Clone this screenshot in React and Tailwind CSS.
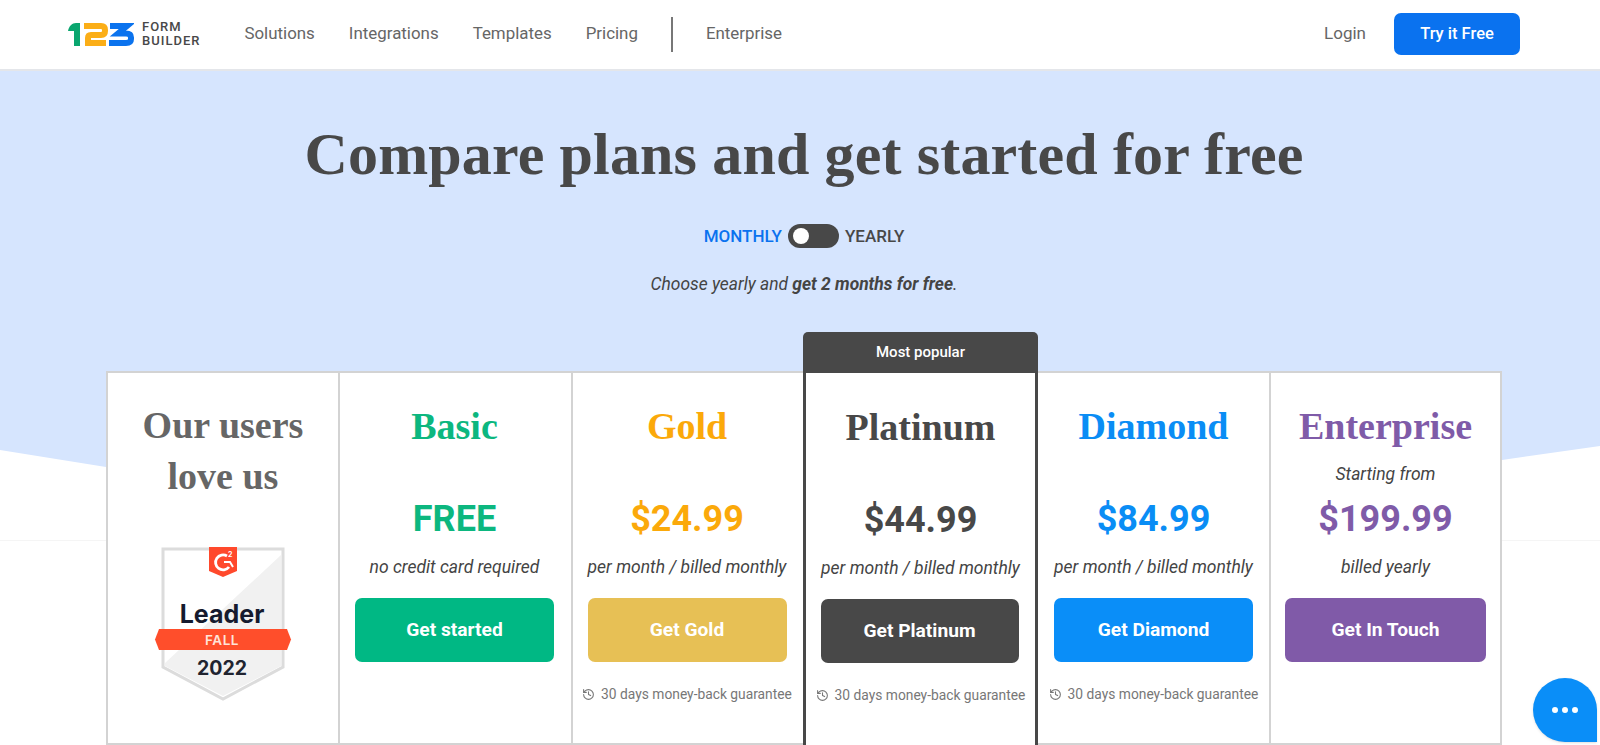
import React from 'react'
import { History } from 'lucide-react'

const plans = [
  { name: 'Basic', color: 'text-[#0cb77f]', price: 'FREE', note: 'no credit card required', cta: 'Get started', btn: 'bg-[#00b884] w-[199px]', cell: 'pr-[2px]' },
  { name: 'Gold', color: 'text-[#fba90a]', price: '$24.99', note: 'per month / billed monthly', cta: 'Get Gold', btn: 'bg-[#e7c055] w-[199px]', cell: 'pr-[2px]', guarantee: true },
  { name: 'Platinum', color: 'text-[#484848]', price: '$44.99', note: 'per month / billed monthly', cta: 'Get Platinum', btn: 'bg-[#484848] w-[198px] mr-[2px]', guarantee: true, popular: true },
  { name: 'Diamond', color: 'text-[#0a8df5]', price: '$84.99', note: 'per month / billed monthly', cta: 'Get Diamond', btn: 'bg-[#0a8ef8] w-[199px]', cell: '', guarantee: true },
  { name: 'Enterprise', color: 'text-[#7f5ba8]', price: '$199.99', note: 'billed yearly', cta: 'Get In Touch', btn: 'bg-[#805aa8] w-[201px]', cell: '', starting: true },
]

function Logo() {
  return (
    <svg width="66" height="26" viewBox="0 0 66 26" className="shrink-0">
      <path d="M0 10 C1 5 4 2 8 2 H12 V25 H6 V10 Z" fill="#0aa66f" />
      <path d="M16 5 H33 Q37 5 37 9 V10 Q37 14 33 14 H23 Q20 14 20 17 V22 H38" fill="none" stroke="#fbae17" strokeWidth="6" />
      <path d="M42 5 H59 L50 12.5 H58 Q63 12.5 63 16.5 V18 Q63 22 58 22 H41" fill="none" stroke="#0b73ee" strokeWidth="6" />
    </svg>
  )
}

function Badge() {
  return (
    <svg width="138" height="154" viewBox="0 0 138 154">
      <path d="M9 2 H129 V120 L69 152 L9 120 Z" fill="#ffffff" stroke="#dcdcdc" strokeWidth="3" />
      <path d="M127 8 V119 L69 149 L11 119 L11 116 Z" fill="#f1f1f1" />
      <path d="M55 0 H83 V24 L69 30 L55 24 Z" fill="#ff492c" />
      <path d="M73 9 A7.5 7.5 0 1 0 75 20" fill="none" stroke="#ffffff" strokeWidth="2.8" />
      <path d="M70 15 H76 L79 20" fill="none" stroke="#ffffff" strokeWidth="2" />
      <text x="74" y="10" fontFamily="Inter, sans-serif" fontWeight="700" fontSize="7" fill="#ffffff">2</text>
      <text x="68" y="76" textAnchor="middle" fontFamily="Inter, sans-serif" fontWeight="700" fontSize="25" fill="#151a2e">Leader</text>
      <path d="M5 82 H133 L137 92.5 L133 103 H5 L1 92.5 Z" fill="#ff4e2b" />
      <text x="68" y="98" textAnchor="middle" fontFamily="Inter, sans-serif" fontWeight="600" fontSize="13.5" letterSpacing="0.5" fill="#ffe3d8">FALL</text>
      <text x="68" y="128" textAnchor="middle" fontFamily="Inter, sans-serif" fontWeight="700" fontSize="19.5" fill="#20232f">2022</text>
    </svg>
  )
}

function PlanColumn({ plan }) {
  return (
    <div className={`relative flex flex-col items-center h-full ${plan.popular ? 'border-x-[3px] border-[#484848] -mr-[2px] pt-[1px] z-10 bg-white' : `border-l-2 border-b-2 border-[#d3d3d3] ${plan.cell}`}`}>
      {plan.popular && (
        <div className="absolute left-[-3px] right-[-3px] top-[-41px] h-[41px] bg-[#484848] rounded-t-[5px] flex items-center justify-center text-white text-[15px] font-medium">
          Most popular
        </div>
      )}
      <h3 className={`font-['Liberation_Serif',serif] font-bold text-[38px] leading-[40px] mt-[33px] ${plan.color}`}>{plan.name}</h3>
      <p className="italic text-[17.5px] leading-[20px] h-[20px] mt-[18px] text-[#444]">{plan.starting ? 'Starting from' : ''}</p>
      <p className={`font-bold text-[36px] leading-[42px] mt-[14px] ${plan.color}`}>{plan.price}</p>
      <p className="italic text-[17.5px] leading-[20px] mt-[17px] text-[#444]">{plan.note}</p>
      <a className={`mt-[21px] h-[64px] rounded-[7px] flex items-center justify-center text-white text-[19.2px] font-bold ${plan.btn}`}>{plan.cta}</a>
      {plan.guarantee && (
        <p className="mt-[23px] flex items-center gap-[6px] text-[13.8px] leading-[18px] text-[#777]">
          <History size={13} strokeWidth={2} />
          30 days money-back guarantee
        </p>
      )}
    </div>
  )
}

export default function App() {
  return (
    <div className="relative h-[745px] overflow-hidden bg-white font-['Roboto',sans-serif]">
      <header className="relative z-10 h-[71px] bg-white border-b-2 border-[#e4e6ea] flex items-center pl-[68px] pr-[80px] pb-[1px]">
        <Logo />
        <div className="ml-[8px] text-[13px] leading-[14px] font-medium tracking-[1px] text-[#484848]">
          <div>FORM</div>
          <div>BUILDER</div>
        </div>
        <nav className="ml-[44px] flex items-center text-[16.9px] text-[#666] gap-[34px]">
          <a>Solutions</a>
          <a>Integrations</a>
          <a>Templates</a>
          <a>Pricing</a>
          <span className="w-[2px] h-[35px] bg-[#777] -ml-px -mr-px" />
          <a>Enterprise</a>
        </nav>
        <a className="ml-auto text-[17px] text-[#666]">Login</a>
        <a className="ml-[28px] w-[126px] h-[42px] rounded-[7px] bg-[#0a72ef] text-white text-[16.5px] font-medium flex items-center justify-center">Try it Free</a>
      </header>

      <section className="relative h-[674px]">
        <svg className="absolute left-0 top-0 w-full h-[500px]" viewBox="0 0 1600 500" preserveAspectRatio="none">
          <path d="M0 0 H1600 V375 L1502 389 L800 500 L106 396 L0 379 Z" fill="#d6e5fe" />
        </svg>
        <div className="absolute left-0 right-0 top-[469px] h-px bg-[#f5f5f5]" />

        <div className="relative ml-[106px] mr-[98px] flex flex-col items-center">
          <h1 className="mt-[45px] font-['Liberation_Serif',serif] font-bold text-[60px] leading-[76px] tracking-[0.15px] text-[#484848] whitespace-nowrap">
            Compare plans and get started for free
          </h1>
          <div className="mt-[32px] flex items-center gap-[6px] text-[17px] font-medium leading-[24px]">
            <span className="text-[#0a72ef]">MONTHLY</span>
            <span className="w-[51px] h-[24px] rounded-full bg-[#484848] flex items-center pl-[5px]">
              <span className="w-[16px] h-[16px] rounded-full bg-white" />
            </span>
            <span className="text-[#484848]">YEARLY</span>
          </div>
          <p className="mt-[24px] text-[17.4px] italic leading-[24px] text-[#444]">
            Choose yearly and <b className="font-bold">get 2 months for free</b>.
          </p>
        </div>

        <div className="relative ml-[106px] mr-[98px] mt-[75px] h-[374px] grid grid-cols-[230px_233px_232px_233px_233px_231px] bg-white border-x-2 border-t-2 border-[#d3d3d3]">
          <div className="flex flex-col items-center h-full border-b-2 border-[#d3d3d3]">
            <h2 className="mt-[27px] font-['Liberation_Serif',serif] font-bold text-[38px] leading-[51px] text-center text-[#666]">
              Our users<br />love us
            </h2>
            <div className="mt-[45px]">
              <Badge />
            </div>
          </div>
          {plans.map((plan) => (
            <PlanColumn key={plan.name} plan={plan} />
          ))}
        </div>
      </section>

      <div className="absolute right-[3px] bottom-[3px] z-20 w-[64px] h-[64px] rounded-[32px] rounded-br-none bg-[#0a8ef8] flex items-center justify-center gap-[4px] shadow-sm">
        <span className="w-[6px] h-[6px] rounded-full bg-white" />
        <span className="w-[6px] h-[6px] rounded-full bg-white" />
        <span className="w-[6px] h-[6px] rounded-full bg-white" />
      </div>
    </div>
  )
}
